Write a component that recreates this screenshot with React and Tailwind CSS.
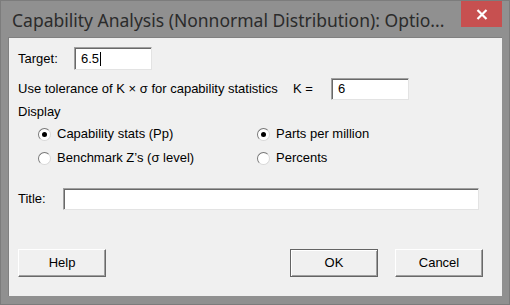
import React from 'react';

const body = { fontFamily: '"Liberation Sans", Arial, sans-serif' };

const Radio = ({ checked, label }) => (
  <label className="flex items-center h-4 gap-[6px]">
    <span className="w-[13px] h-[13px] rounded-full bg-white border border-t-[#777777] border-l-[#777777] border-r-[#d9d9d9] border-b-[#d9d9d9] flex items-center justify-center">
      {checked && <span className="w-[5px] h-[5px] rounded-full bg-black" />}
    </span>
    <span>{label}</span>
  </label>
);

const Field = ({ value, className, caret }) => (
  <div
    className={`bg-white border border-t-[#a0a0a0] border-l-[#a0a0a0] border-r-[#e3e3e3] border-b-[#e3e3e3] shadow-[inset_1px_1px_0_#696969] flex items-center pl-[6px] ${className}`}
  >
    {value}
    {caret && <span className="inline-block w-px h-[14px] bg-black ml-px" />}
  </div>
);

const Button = ({ label, primary }) => (
  <button
    className={`w-[88px] h-[28px] bg-[#f0f0f0] text-black ${
      primary
        ? 'border border-[#646464] shadow-[inset_1px_1px_0_#ffffff,inset_-1px_-1px_0_#a0a0a0]'
        : 'border border-t-white border-l-white border-r-[#696969] border-b-[#696969] shadow-[inset_-1px_-1px_0_#a0a0a0]'
    }`}
  >
    {label}
  </button>
);

export default function App() {
  return (
    <div className="w-[510px] h-[305px] bg-[#909090] border border-[#7c7c7c] flex flex-col">
      {/* Title bar */}
      <div className="h-[36px] flex items-start justify-between">
        <div
          className="pl-[11px] pt-[7px] text-[17.5px] leading-[24px] text-[#2b2b2b] whitespace-nowrap"
          style={{ fontFamily: '"Noto Sans", "Open Sans", sans-serif' }}
        >
          Capability Analysis (Nonnormal Distribution): Optio...
        </div>
        <div className="mr-[7px] w-[41px] h-[26px] bg-[#c75050] flex items-center justify-center">
          <svg width="12" height="11" viewBox="0 0 12 11">
            <path d="M1.5 1 L10.5 10 M10.5 1 L1.5 10" stroke="white" strokeWidth="2.2" />
          </svg>
        </div>
      </div>

      {/* Client area */}
      <div
        className="mx-[7px] h-[259px] bg-[#f0f0f0] border-l border-t border-[#808080] text-[13px] text-black flex flex-col pl-[9px]"
        style={body}
      >
        <div className="mt-[9px] flex items-center h-[23px]">
          <span className="w-[56px]">Target:</span>
          <Field value="6.5" caret className="w-[78px] h-[23px]" />
        </div>

        <div className="mt-[8px] flex items-center h-[22px]">
          <span>Use tolerance of K × σ for capability statistics</span>
          <span className="ml-auto w-[38px]">K =</span>
          <Field value="6" className="w-[78px] h-[22px] mr-[93px]" />
        </div>

        <div className="mt-[4px] h-4 flex items-center">Display</div>

        <div className="mt-[6px] grid grid-cols-[219px_1fr] gap-y-[8px] pl-[20px]">
          <Radio checked label="Capability stats (Pp)" />
          <Radio checked label="Parts per million" />
          <Radio label="Benchmark Z’s (σ level)" />
          <Radio label="Percents" />
        </div>

        <div className="mt-[22px] flex items-center h-[22px]">
          <span className="w-[45px]">Title:</span>
          <Field value="" className="w-[416px] h-[22px]" />
        </div>

        <div className="mt-[39px] flex items-center">
          <Button label="Help" />
          <div className="ml-auto flex gap-[17px] mr-[19px]">
            <Button label="OK" primary />
            <Button label="Cancel" />
          </div>
        </div>
      </div>
      <div className="flex-1" />
    </div>
  );
}
